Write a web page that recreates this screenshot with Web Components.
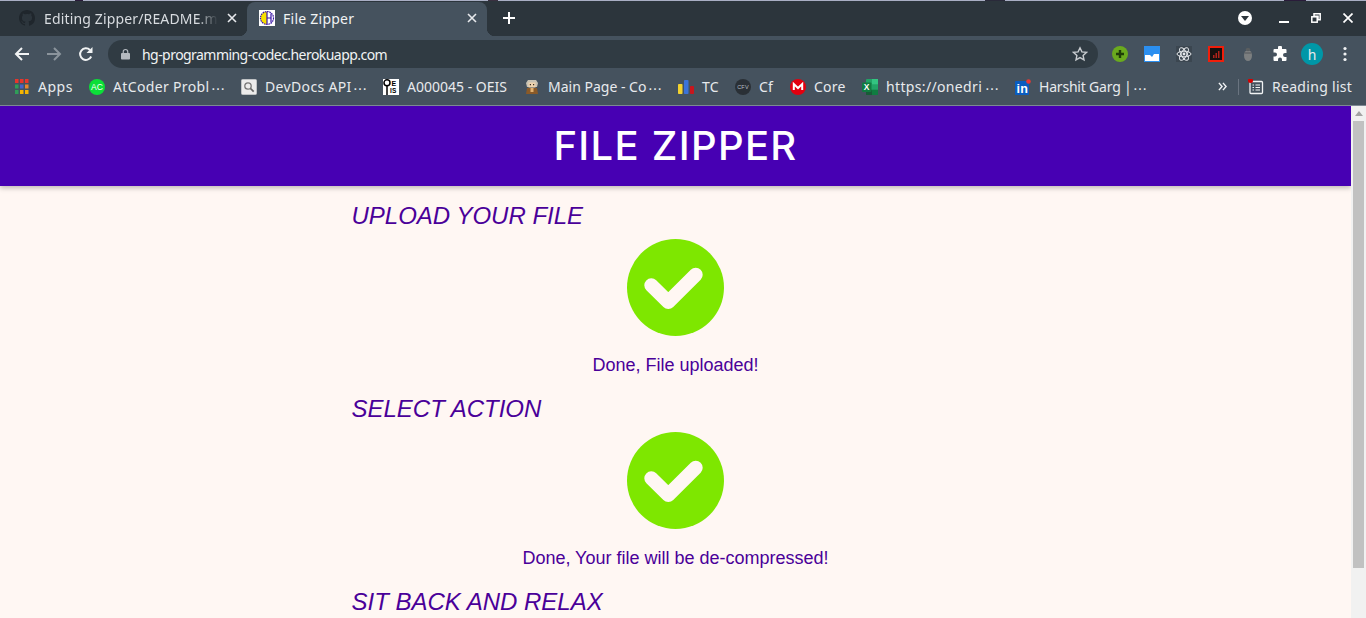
<!DOCTYPE html>
<html>
<head>
<meta charset="utf-8">
<title>File Zipper</title>
<style>
html,body{margin:0;height:100%;overflow:hidden;background:#fff7f3;}
body{display:flex;flex-direction:column;font-family:"Liberation Sans",sans-serif;}
</style>
</head>
<body>
<browser-chrome></browser-chrome>
<page-view>
  <zip-header>FILE ZIPPER</zip-header>
  <zip-step heading="UPLOAD YOUR FILE">Done, File uploaded!</zip-step>
  <zip-step heading="SELECT ACTION">Done, Your file will be de-compressed!</zip-step>
  <zip-step heading="SIT BACK AND RELAX" empty></zip-step>
</page-view>

<script>
// favicons for the bookmark bar and tabs, all 16x16
var icons = {
  github:'<svg viewBox="0 0 16 16" width="16" height="16"><path fill="#1f262c" d="M8 0C3.58 0 0 3.58 0 8c0 3.54 2.29 6.53 5.47 7.59.4.07.55-.17.55-.38v-1.4c-2.01.37-2.53-.49-2.69-.94-.09-.23-.48-.94-.82-1.13-.28-.15-.68-.52-.01-.53.63-.01 1.08.58 1.23.82.72 1.21 1.87.87 2.33.66.07-.52.28-.87.51-1.07-1.78-.2-3.64-.89-3.64-3.95 0-.87.31-1.59.82-2.15-.08-.2-.36-1.02.08-2.12 0 0 .67-.21 2.2.82A7.6 7.6 0 0 1 8 3.9c.68 0 1.36.09 2 .27 1.53-1.04 2.2-.82 2.2-.82.44 1.1.16 1.92.08 2.12.51.56.82 1.27.82 2.15 0 3.07-1.87 3.75-3.65 3.95.29.25.54.73.54 1.48v2.2c0 .21.15.46.55.38A8 8 0 0 0 16 8c0-4.42-3.58-8-8-8z"/></svg>',
  zipper:'<svg viewBox="0 0 16 16" width="16" height="16"><rect width="16" height="16" fill="#fff"/><path d="M8 1.500A6.500 6.500 0 0 0 1.500 8 6.500 6.500 0 0 0 8 14.500z" fill="#f7e000"/><circle cx="8" cy="8" r="6.500" fill="none" stroke="#3a14a8" stroke-width="1.200" stroke-dasharray="1.600 .7"/><path d="M8 2v12M12 3.500v9M8 8h4" stroke="#3a14a8" stroke-width="1.200" fill="none"/></svg>',
  apps:'<svg viewBox="0 0 14 15" width="14" height="15"><path fill="#e8362b" d="M0 0h3.500v4H0zM5 0h3.500v4H5zM10 0h3.500v4H10z"/><path fill="#2f9e58" d="M0 5.500h3.500v4H0zM0 11h3.500v4H0z"/><path fill="#4a63c9" d="M5 5.500h3.500v4H5z"/><path fill="#e8862b" d="M10 5.500h3.500v4H10z"/><path fill="#f4b400" d="M5 11h3.500v4H5zM10 11h3.500v4H10z"/></svg>',
  atcoder:'<svg viewBox="0 0 16 16" width="16" height="16"><circle cx="8" cy="8" r="8" fill="#0bdf38"/><text x="8" y="11" font-size="8.500" font-family="Liberation Sans" fill="#fff" text-anchor="middle">AC</text></svg>',
  devdocs:'<svg viewBox="0 0 16 16" width="16" height="16"><rect x=".5" y=".5" width="15" height="15" rx="1" fill="#ececec" stroke="#bfc2c4"/><circle cx="7" cy="7" r="3.200" fill="none" stroke="#777" stroke-width="1.300"/><path d="m9.500 9.500 3.200 3.200" stroke="#666" stroke-width="1.700"/></svg>',
  oeis:'<svg viewBox="0 0 16 16" width="16" height="16"><rect width="16" height="16" fill="#fff"/><circle cx="4" cy="3.800" r="3" fill="none" stroke="#000" stroke-width="1.500"/><path d="M4 7v9" stroke="#000" stroke-width="1.500"/><text x="8.500" y="6.500" font-size="7" font-weight="700" font-family="Liberation Sans">E</text><text x="7" y="14.400" font-size="6.500" font-weight="700" font-family="Liberation Sans">IS</text></svg>',
  wiki:'<svg viewBox="0 0 16 16" width="16" height="16"><path fill="#c9c3b4" d="M4 1h8l2 3-1 4H3L2 4z"/><rect x="4.500" y="3.500" width="7" height="5" fill="#efd4ae"/><path fill="#3a2e20" d="M5.800 5H7v1.200H5.800zM9 5h1.200v1.200H9z"/><path fill="#8a5a28" d="M3 9h10l1 6H2z"/><path fill="#e0b070" d="M6.500 9h3v4h-3z"/></svg>',
  tc:'<svg viewBox="0 0 16 16" width="16" height="16"><rect x="0" y="5" width="4.500" height="10" rx=".8" fill="#f3d22e"/><rect x="6" y="1" width="4.500" height="14" rx=".8" fill="#3b73d9"/><rect x="12" y="7" width="4" height="8" rx=".8" fill="#c8161d"/></svg>',
  cf:'<svg viewBox="0 0 16 16" width="16" height="16"><circle cx="8" cy="8" r="8" fill="#2a3036"/><text x="8" y="10" font-size="5.500" font-family="Liberation Sans" fill="#b5bcc2" text-anchor="middle">CFV</text></svg>',
  core:'<svg viewBox="0 0 16 16" width="16" height="16"><circle cx="8" cy="8" r="8" fill="#e3000f"/><path d="M3.800 11V5l4.200 4 4.200-4v6" fill="none" stroke="#fff" stroke-width="2"/></svg>',
  excel:'<svg viewBox="0 0 16 16" width="16" height="16"><rect x="4" y="0" width="12" height="16" rx="1" fill="#21a366"/><rect x="10" y="0" width="6" height="5.300" fill="#33c481"/><rect x="10" y="10.700" width="6" height="5.300" fill="#107c41"/><rect x="4" y="10.700" width="6" height="5.300" fill="#185c37"/><rect x="0" y="3.500" width="9.500" height="9.500" rx="1" fill="#107c41"/><text x="4.700" y="11.200" font-size="8.500" font-weight="700" font-family="Liberation Sans" fill="#fff" text-anchor="middle">X</text></svg>',
  linkedin:'<svg viewBox="0 0 16 16" width="16" height="16"><rect x="0" y="2" width="14" height="14" rx="1" fill="#0a5cc0"/><text x="1.500" y="13.800" font-size="12.500" font-weight="700" font-family="Liberation Sans" fill="#fff">in</text><circle cx="13.500" cy="2.500" r="2.300" fill="#e53935"/></svg>'
};

var chromeTpl = document.createElement("template");
chromeTpl.innerHTML = `
<style>
:host{display:block;flex:none;font-family:"Noto Sans","Open Sans",sans-serif;color:#e8eaed;background:#45525e;}
svg{display:block;flex:none;}
.edge{height:1px;background:linear-gradient(to right,#a9aec4 75px,#2a1c3a 75px,#2a1c3a 83px,#a9aec4 83px,#a9aec4 488px,#3a3040 488px,#3a3040 498px,#a9aec4 498px,#a9aec4 985px,#2a2a3a 985px,#2a2a3a 1005px,#a9aec4 1005px,#a9aec4 1284px,#2a1c3a 1284px,#2a1c3a 1306px,#a9aec4 1306px);}
.tabs{height:35px;background:#2c353c;display:flex;align-items:flex-end;padding-left:7px;}
.tab{box-sizing:border-box;width:240px;height:34px;display:flex;align-items:center;gap:8px;padding:0 10px 2px 12px;font-size:14px;letter-spacing:.25px;white-space:nowrap;position:relative;}
.tab.on{background:#45525e;border-radius:8px 8px 0 0;color:#f1f3f4;}
.tab.on::before,.tab.on::after{content:"";position:absolute;bottom:0;width:8px;height:8px;}
.tab.on::before{left:-8px;background:radial-gradient(circle at 0 0,transparent 8px,#45525e 8.5px);}
.tab.on::after{right:-8px;background:radial-gradient(circle at 100% 0,transparent 8px,#45525e 8.5px);}
.tab.off{color:#d8dce0;gap:9px;letter-spacing:.15px;}
.tab span{flex:1;overflow:hidden;}
.tab.off span{-webkit-mask-image:linear-gradient(to right,#000 88%,transparent 100%);mask-image:linear-gradient(to right,#000 88%,transparent 100%);}
.plus{margin-left:16px;margin-bottom:12px;}
.winbtns{margin-left:auto;display:flex;align-items:center;gap:22px;height:34px;box-sizing:border-box;padding:0 13px 2px 0;}
.bar{height:36px;display:flex;align-items:center;box-sizing:border-box;padding:0 5px 0 14px;}
.nav{display:flex;gap:16px;margin-right:14px;}
.omni{flex:1;height:28px;border-radius:14px;background:#303b43;display:flex;align-items:center;padding:0 10px 0 13px;gap:12px;font-size:14px;letter-spacing:-.55px;color:#f1f3f4;}
.omni span{flex:1;}
.omni svg:last-child{margin-left:-1px;}
.ext{display:flex;align-items:center;gap:16px;margin-left:14px;}
.marks{height:34px;box-sizing:border-box;border-bottom:1px solid #7d8894;display:flex;align-items:center;padding:0 14px 4px 15px;font-size:14px;letter-spacing:.2px;white-space:nowrap;}
.mark{display:flex;align-items:center;gap:8px;margin-right:16px;}
.mark span{display:flex;justify-content:space-between;}
.dots{font-family:"DejaVu Sans",sans-serif;font-weight:400;letter-spacing:0;}
.more{margin-left:auto;display:flex;align-items:center;}
.sep{width:1px;height:16px;background:#6a7480;margin:0 9px 0 11px;}
.avatar{width:22px;height:22px;border-radius:50%;background:#0097a7;color:#e8eaed;font-size:14px;display:flex;align-items:center;justify-content:center;margin-left:-3px;}
</style>
<div class="edge"></div>
<div class="tabs">
  <div class="tab off"><i id="gh"></i><span>Editing Zipper/README.m</span><svg viewBox="0 0 10 10" width="10" height="10"><path d="M1 1l8 8M9 1l-8 8" stroke="#e8eaed" stroke-width="1.600"/></svg></div>
  <div class="tab on"><i id="zp"></i><span>File Zipper</span><svg viewBox="0 0 10 10" width="10" height="10"><path d="M1 1l8 8M9 1l-8 8" stroke="#e8eaed" stroke-width="1.600"/></svg></div>
  <svg class="plus" viewBox="0 0 12 12" width="12" height="12"><path d="M6 0v12M0 6h12" stroke="#fff" stroke-width="2"/></svg>
  <div class="winbtns">
    <svg style="margin-right:5px" viewBox="0 0 14 14" width="14" height="14"><circle cx="7" cy="7" r="7" fill="#fff"/><path d="M3 5h8l-4 5z" fill="#2c353c"/></svg>
    <svg viewBox="0 0 10 10" width="10" height="10"><path d="M0 9h10" stroke="#fff" stroke-width="2"/></svg>
    <svg viewBox="0 0 10 10" width="10" height="10"><path d="M3 .8h6.200v6H7V3.200H3z" fill="none" stroke="#fff" stroke-width="1.500"/><rect x=".8" y="3.800" width="5.400" height="5.400" fill="none" stroke="#fff" stroke-width="1.500"/></svg>
    <svg viewBox="0 0 10 10" width="10" height="10"><path d="M.5.500l9 9M9.500.500l-9 9" stroke="#fff" stroke-width="1.700"/></svg>
  </div>
</div>
<div class="bar">
  <div class="nav">
    <svg viewBox="0 0 16 16" width="16" height="16"><path d="M15 8H2M8 2 2 8l6 6" fill="none" stroke="#f1f3f4" stroke-width="2"/></svg>
    <svg viewBox="0 0 16 16" width="16" height="16"><path d="M1 8h13M8 2l6 6-6 6" fill="none" stroke="#8b949c" stroke-width="2"/></svg>
    <svg viewBox="0 0 16 16" width="16" height="16"><path d="M13.200 10.500A5.800 5.800 0 1 1 12 4" fill="none" stroke="#f1f3f4" stroke-width="2"/><path d="M14.500 1v6h-6z" fill="#f1f3f4"/></svg>
  </div>
  <div class="omni">
    <svg viewBox="0 0 10 12" width="9" height="12"><rect y="5" width="10" height="7" rx="1" fill="#b5bac0"/><path d="M2.500 5V3.500a2.500 2.500 0 0 1 5 0V5" fill="none" stroke="#b5bac0" stroke-width="1.300"/></svg>
    <span>hg-programming-codec.herokuapp.com</span>
    <svg viewBox="0 0 16 16" width="16" height="16"><path d="m8 1.800 1.900 4.100 4.500.5-3.300 3 .9 4.400L8 11.600l-4 2.200.9-4.400-3.300-3 4.500-.5z" fill="none" stroke="#c8ccd0" stroke-width="1.400"/></svg>
  </div>
  <div class="ext">
    <svg viewBox="0 0 16 16" width="16" height="16"><circle cx="8" cy="8" r="8" fill="#6aaa1e"/><path d="M8 4v8M4 8h8" stroke="#1f3d08" stroke-width="2.400"/></svg>
    <svg viewBox="0 0 16 16" width="16" height="16"><rect width="16" height="16" fill="#2b8ff0"/><path d="M1 9h5l2 2 2-3h5v7H1z" fill="#fff"/></svg>
    <svg viewBox="0 0 16 16" width="16" height="16"><rect width="16" height="16" fill="#3b4650"/><g fill="none" stroke="#e4e7ea" stroke-width="1"><ellipse cx="8" cy="8" rx="7" ry="2.800"/><ellipse cx="8" cy="8" rx="7" ry="2.800" transform="rotate(60 8 8)"/><ellipse cx="8" cy="8" rx="7" ry="2.800" transform="rotate(120 8 8)"/></g><circle cx="8" cy="8" r="1.400" fill="#e4e7ea"/></svg>
    <svg viewBox="0 0 16 16" width="16" height="16"><rect width="16" height="16" fill="#f01e0a"/><rect x="2" y="2" width="12" height="12" fill="#17110f"/><path d="M5 12V9h1.500v3zM7.500 12V7H9v5zM10 12V5h1.500v7z" fill="#b0231a"/></svg>
    <svg viewBox="0 0 16 16" width="16" height="16"><ellipse cx="8" cy="9.500" rx="4" ry="5.500" fill="#7c7f80"/><ellipse cx="8" cy="3.500" rx="2.200" ry="1.800" fill="#5a5e60"/><path d="M4.500 7h7" stroke="#53575a"/></svg>
    <svg viewBox="0 0 16 16" width="16" height="16"><path fill="#fff" d="M6 1.500a2 2 0 0 1 4 0V3h3.500a1 1 0 0 1 1 1v3H13a2 2 0 0 0 0 4h1.500v3a1 1 0 0 1-1 1H10v-1.500a2 2 0 0 0-4 0V15H2.500a1 1 0 0 1-1-1v-3.500H3a2 2 0 0 0 0-4H1.500V4a1 1 0 0 1 1-1H6z"/></svg>
    <div class="avatar">h</div>
    <svg viewBox="0 0 4 16" width="4" height="16" style="margin-left:4px;margin-right:14px"><circle cx="2" cy="2.500" r="1.600" fill="#f1f3f4"/><circle cx="2" cy="8" r="1.600" fill="#f1f3f4"/><circle cx="2" cy="13.500" r="1.600" fill="#f1f3f4"/></svg>
  </div>
</div>
<div class="marks" id="marks">
  <div class="more">
    <svg viewBox="0 0 10 10" width="9" height="9"><path d="M1 1l3.500 4L1 9M5.500 1 9 5 5.500 9" fill="none" stroke="#f1f3f4" stroke-width="1.600"/></svg>
    <div class="sep"></div>
    <div class="mark" style="margin:0">
      <svg viewBox="0 0 16 16" width="16" height="16"><rect x="2" y="2.500" width="12.500" height="12" rx="1" fill="none" stroke="#f1f3f4" stroke-width="1.300"/><path d="M4.500 6h1.500M7.500 6h4.500M4.500 8.500h1.500M7.500 8.500h4.500M4.500 11h1.500M7.500 11h4.500" stroke="#f1f3f4" stroke-width="1.200"/><circle cx="2.500" cy="1.500" r="2.500" fill="#d60000"/></svg>
      <span style="width:80px;letter-spacing:.3px">Reading list</span>
    </div>
  </div>
</div>
`;

// bookmarks: label, icon, text width, letter spacing (optional)
var marks = [
  ["Apps","apps",35,.5],
  ["AtCoder Probl…","atcoder",112,.35],
  ["DevDocs API…","devdocs",102,.35],
  ["A000045 - OEIS","oeis",101,0],
  ["Main Page - Co…","wiki",114,0],
  ["TC","tc",17],
  ["Cf","cf",15],
  ["Core","core",32],
  ["https://onedri…","excel",113,.35],
  ["Harshit Garg |…","linkedin",108,-.2]
];

class BrowserChrome extends HTMLElement {
  constructor(){
    super();
    this.attachShadow({mode:"open"});
  }
  connectedCallback(){
    this.shadowRoot.appendChild(chromeTpl.content.cloneNode(true));
    var root = this.shadowRoot;
    root.getElementById("gh").outerHTML = icons.github;
    root.getElementById("zp").outerHTML = icons.zipper;
    var bar = root.getElementById("marks");
    var more = bar.querySelector(".more");
    marks.forEach(function(m){
      var d = document.createElement("div");
      d.className = "mark";
      d.innerHTML = icons[m[1]] + "<span></span>";
      var s = d.querySelector("span");
      s.style.width = m[2] + "px";
      if(m[3] !== undefined) s.style.letterSpacing = m[3] + "px";
      if(m[1] == "apps") d.style.gap = "9px";
      if(m[0].endsWith("…")){
        s.textContent = m[0].slice(0,-1);
        var dots = document.createElement("b");
        dots.className = "dots";
        dots.textContent = "…";
        s.appendChild(dots);
      } else {
        s.textContent = m[0];
      }
      bar.insertBefore(d, more);
    });
  }
}
customElements.define("browser-chrome", BrowserChrome);

// page area with a fake scrollbar at the right
var pageTpl = document.createElement("template");
pageTpl.innerHTML = `
<style>
:host{display:flex;flex:1;min-height:0;overflow:hidden;background:#fff7f3;}
.main{flex:1;min-width:0;overflow:hidden;}
.scroll{width:15px;flex:none;background:#f1f1f1;display:flex;flex-direction:column;align-items:center;}
.arrow{height:15px;display:flex;align-items:center;justify-content:center;}
.thumb{width:11px;height:447px;background:#c1c1c1;}
</style>
<div class="main"><slot></slot></div>
<div class="scroll">
  <div class="arrow"><svg viewBox="0 0 8 5" width="8" height="5"><path d="M4 0l4 5H0z" fill="#a3a3a3"/></svg></div>
  <div class="thumb"></div>
</div>
`;
class PageView extends HTMLElement {
  constructor(){
    super();
    this.attachShadow({mode:"open"});
    this.shadowRoot.appendChild(pageTpl.content.cloneNode(true));
  }
}
customElements.define("page-view", PageView);

var headerTpl = document.createElement("template");
headerTpl.innerHTML = `
<style>
:host{display:flex;align-items:center;justify-content:center;box-sizing:border-box;height:80px;padding-bottom:2px;background:#4700b3;color:#fff;box-shadow:0 2px 5px rgba(0,0,0,.25);position:relative;font-family:Inter,sans-serif;font-size:40px;font-weight:500;letter-spacing:1.3px;}
</style>
<slot></slot>
`;
class ZipHeader extends HTMLElement {
  constructor(){
    super();
    this.attachShadow({mode:"open"});
    this.shadowRoot.appendChild(headerTpl.content.cloneNode(true));
  }
}
customElements.define("zip-header", ZipHeader);

var stepTpl = document.createElement("template");
stepTpl.innerHTML = `
<style>
:host{display:block;width:648px;margin:0 auto;color:#4a0099;font-family:"Liberation Sans",sans-serif;}
:host([empty]) .body{display:none;}
h2{margin:0;padding-top:16px;font-size:24px;font-weight:400;font-style:italic;line-height:28px;}
.body{display:flex;flex-direction:column;align-items:center;padding-top:9px;}
svg{display:block;}
p{margin:0;padding:19px 0 3px;font-size:18px;line-height:21px;}
</style>
<h2></h2>
<div class="body">
  <svg viewBox="0 0 97 97" width="97" height="97"><circle cx="48.500" cy="48.500" r="48.500" fill="#7ee700"/><path d="M24.300 46.300 41.300 63 68.700 35.700" fill="none" stroke="#fff7f3" stroke-width="14" stroke-linecap="round" stroke-linejoin="round"/></svg>
  <p><slot></slot></p>
</div>
`;
class ZipStep extends HTMLElement {
  constructor(){
    super();
    this.attachShadow({mode:"open"});
    this.shadowRoot.appendChild(stepTpl.content.cloneNode(true));
  }
  connectedCallback(){
    this.shadowRoot.querySelector("h2").textContent = this.getAttribute("heading");
  }
}
customElements.define("zip-step", ZipStep);
</script>
</body>
</html>
